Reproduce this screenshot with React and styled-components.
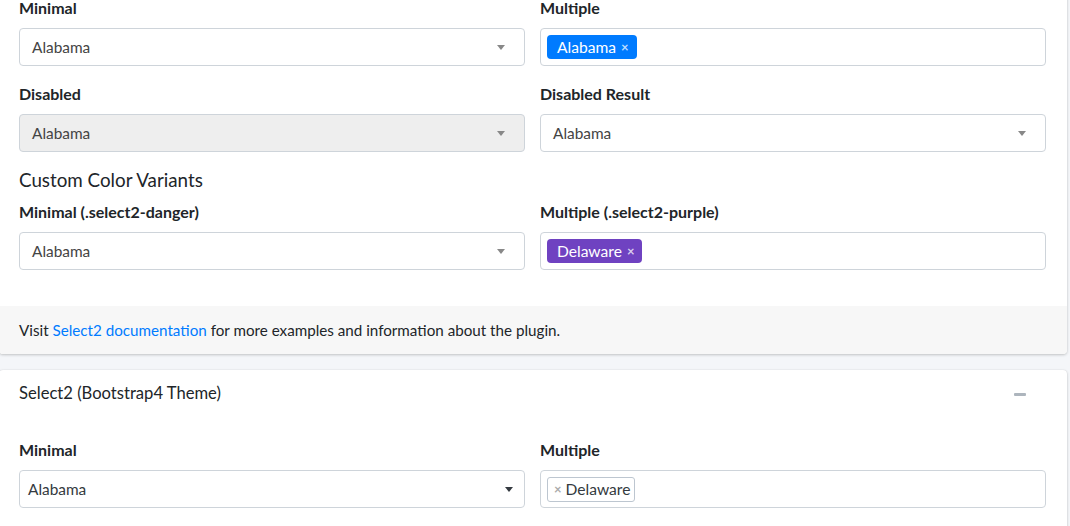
import styled, { createGlobalStyle } from 'styled-components'

const GlobalStyle = createGlobalStyle`
  html, body {
    margin: 0;
    padding: 0;
    background: #f4f6f9;
    font-family: 'Lato', 'Source Sans Pro', sans-serif;
    font-size: 16px;
    color: #212529;
    overflow: hidden;
  }
  * { box-sizing: border-box; }
`

const Page = styled.div`
  padding: 0 3px 40px 0;
`

const Card = styled.div`
  background: #fff;
  border-radius: ${(p) => (p.$cut ? '0 0 4px 4px' : '4px')};
  box-shadow: 0 0 1px rgba(0, 0, 0, 0.125), 0 1px 3px rgba(0, 0, 0, 0.2);
  margin: ${(p) => (p.$cut ? '-4px' : '0')} 0 16px -1px;
  overflow: hidden;
`

const CardHeader = styled.div`
  display: flex;
  align-items: center;
  justify-content: space-between;
  padding: 12px 20px 14px 20px;
`

const CardTitle = styled.h3`
  margin: 0;
  font-size: 16.6px;
  font-weight: 400;
  line-height: 22px;
`

const ToolButton = styled.button`
  border: 0;
  background: transparent;
  padding: 4px 6px;
  margin-right: 15px;
  display: flex;
  align-items: center;
  cursor: pointer;
`

const Minus = styled.span`
  display: block;
  width: 12px;
  height: 2.5px;
  margin-top: 3px;
  border-radius: 1px;
  background: #adb5bd;
`

const CardBody = styled.div`
  padding: ${(p) => (p.$cut ? '0 20px 20px' : '20px 20px 20px')};
`

const Row = styled.div`
  display: grid;
  grid-template-columns: 506px 506px;
  column-gap: 15px;
`

const Group = styled.div`
  margin-bottom: 16px;
`

const Label = styled.label`
  display: block;
  font-weight: 700;
  line-height: 24px;
  margin-bottom: 8px;
`

const Subtitle = styled.h5`
  margin: 0 0 8px;
  font-size: 18.8px;
  font-weight: 400;
  line-height: 24px;
`

const Select = styled.div`
  display: flex;
  align-items: center;
  height: 38px;
  border: 1px solid #ced4da;
  border-radius: 4px;
  background: ${(p) => (p.$disabled ? '#eeeeee' : '#fff')};
  padding: 0 ${(p) => (p.$bs ? '8px' : '12px')};
  color: ${(p) => (p.$bs ? '#343a40' : '#444')};
  font-size: 15.4px;
`

const Value = styled.span`
  flex: 1;
`

const Arrow = styled.span`
  width: 0;
  height: 0;
  border-left: 4px solid transparent;
  border-right: 4px solid transparent;
  border-top: ${(p) => (p.$bs ? '5px solid #343a40' : '5px solid #888')};
  margin-right: ${(p) => (p.$bs ? '3px' : '7px')};
`

const MultiBox = styled.div`
  display: flex;
  align-items: center;
  height: 38px;
  border: 1px solid #ced4da;
  border-radius: 4px;
  background: #fff;
  padding: 0 6px;
`

const Chip = styled.span`
  display: inline-flex;
  align-items: center;
  height: 24px;
  padding: 0 8px 0 10px;
  border-radius: 4px;
  background: ${(p) => p.$color};
  color: #fff;
  font-size: 15.6px;
`

const ChipClose = styled.span`
  margin-left: 5px;
  font-size: 13px;
  font-weight: 700;
  color: rgba(255, 255, 255, 0.75);
`

const OutlineChip = styled.span`
  display: inline-flex;
  align-items: center;
  height: 25px;
  padding: 0 4px 0 6px;
  border: 1px solid #bdc6d0;
  border-radius: 3px;
  color: #343a40;
  font-size: 15.6px;
`

const OutlineClose = styled.span`
  color: #aaa;
  font-size: 13px;
  font-weight: 700;
  margin-right: 4px;
`

const CardFooter = styled.div`
  background: #f7f7f7;
  padding: 12px 20px;
  line-height: 24px;
  font-size: 15.2px;
`

const Link = styled.a`
  color: #007bff;
  text-decoration: none;
`

const SingleSelect = ({ value, disabled, bs }) => (
  <Select $disabled={disabled} $bs={bs}>
    <Value>{value}</Value>
    <Arrow $bs={bs} />
  </Select>
)

const App = () => (
  <Page>
    <GlobalStyle />
    <Card $cut>
      <CardBody $cut>
        <Row>
          <Group>
            <Label>Minimal</Label>
            <SingleSelect value="Alabama" />
          </Group>
          <Group>
            <Label>Multiple</Label>
            <MultiBox>
              <Chip $color="#007bff">
                Alabama<ChipClose>×</ChipClose>
              </Chip>
            </MultiBox>
          </Group>
          <Group>
            <Label>Disabled</Label>
            <SingleSelect value="Alabama" disabled />
          </Group>
          <Group>
            <Label>Disabled Result</Label>
            <SingleSelect value="Alabama" />
          </Group>
        </Row>
        <Subtitle>Custom Color Variants</Subtitle>
        <Row>
          <Group>
            <Label>Minimal (.select2-danger)</Label>
            <SingleSelect value="Alabama" />
          </Group>
          <Group>
            <Label>Multiple (.select2-purple)</Label>
            <MultiBox>
              <Chip $color="#6f42c1">
                Delaware<ChipClose>×</ChipClose>
              </Chip>
            </MultiBox>
          </Group>
        </Row>
      </CardBody>
      <CardFooter>
        Visit <Link href="#">Select2 documentation</Link> for more examples and information about the plugin.
      </CardFooter>
    </Card>

    <Card>
      <CardHeader>
        <CardTitle>Select2 (Bootstrap4 Theme)</CardTitle>
        <ToolButton aria-label="Collapse">
          <Minus />
        </ToolButton>
      </CardHeader>
      <CardBody>
        <Row>
          <Group>
            <Label>Minimal</Label>
            <SingleSelect value="Alabama" bs />
          </Group>
          <Group>
            <Label>Multiple</Label>
            <MultiBox>
              <OutlineChip>
                <OutlineClose>×</OutlineClose>Delaware
              </OutlineChip>
            </MultiBox>
          </Group>
        </Row>
      </CardBody>
    </Card>
  </Page>
)

export default App
